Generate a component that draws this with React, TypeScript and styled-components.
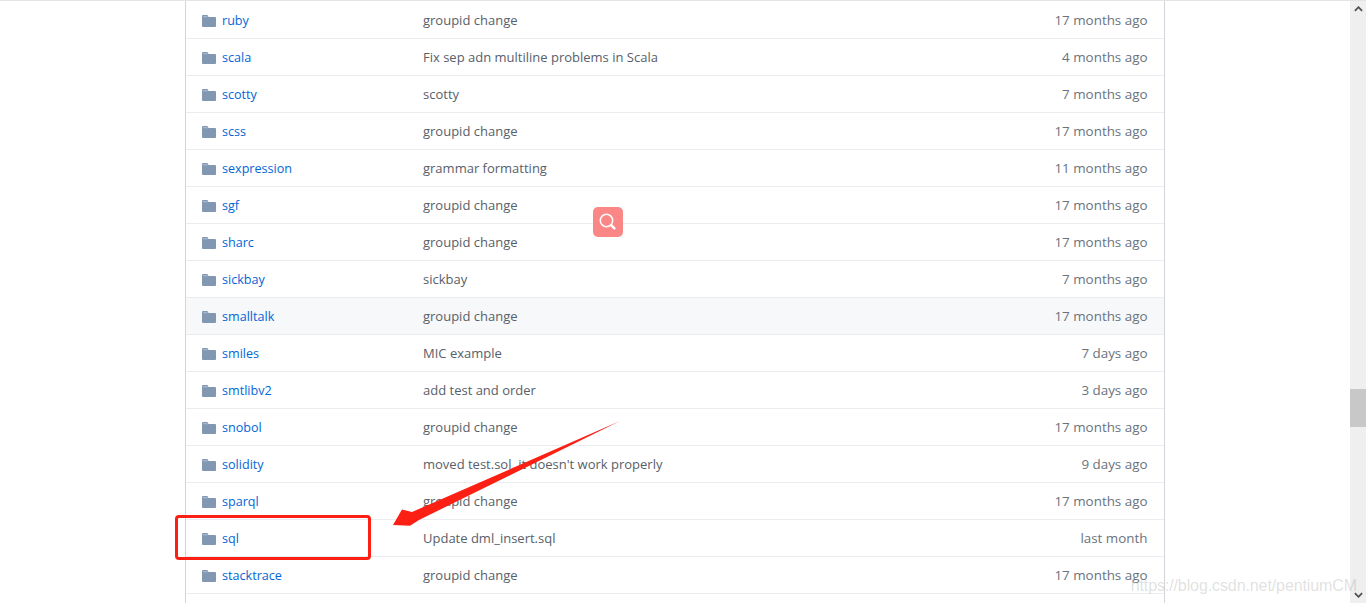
import React from 'react';
import styled, { createGlobalStyle } from 'styled-components';

interface FileRow {
  name: string;
  message: string;
  age: string;
  hovered?: boolean;
}

const rows: FileRow[] = [
  { name: 'ruby', message: 'groupid change', age: '17 months ago' },
  { name: 'scala', message: 'Fix sep adn multiline problems in Scala', age: '4 months ago' },
  { name: 'scotty', message: 'scotty', age: '7 months ago' },
  { name: 'scss', message: 'groupid change', age: '17 months ago' },
  { name: 'sexpression', message: 'grammar formatting', age: '11 months ago' },
  { name: 'sgf', message: 'groupid change', age: '17 months ago' },
  { name: 'sharc', message: 'groupid change', age: '17 months ago' },
  { name: 'sickbay', message: 'sickbay', age: '7 months ago' },
  { name: 'smalltalk', message: 'groupid change', age: '17 months ago', hovered: true },
  { name: 'smiles', message: 'MIC example', age: '7 days ago' },
  { name: 'smtlibv2', message: 'add test and order', age: '3 days ago' },
  { name: 'snobol', message: 'groupid change', age: '17 months ago' },
  { name: 'solidity', message: "moved test.sol, it doesn't work properly", age: '9 days ago' },
  { name: 'sparql', message: 'groupid change', age: '17 months ago' },
  { name: 'sql', message: 'Update dml_insert.sql', age: 'last month' },
  { name: 'stacktrace', message: 'groupid change', age: '17 months ago' },
];

const FolderIcon = () => (
  <FolderSvg viewBox="0 0 14 12" aria-hidden="true">
    <path d="M13 2H6.500L6 1C5.800.6 5.500 0 5 0H1C.5 0 0 .5 0 1v10c0 .5.5 1 1 1h12c.5 0 1-.5 1-1V3c0-.5-.5-1-1-1z" fill="#8197b2" />
    <path d="M1 1.200h4.400l.5 1H1z" fill="#b4c0cf" />
  </FolderSvg>
);

const App = () => {
  return (
    <>
      <GlobalStyle />
      <Page>
        <Main>
          <FileList>
            {rows.map((row) => (
              <Row key={row.name} $hovered={row.hovered}>
                <FolderIcon />
                <Name>{row.name}</Name>
                <Message>{row.message}</Message>
                <Age>{row.age}</Age>
              </Row>
            ))}
          </FileList>
        </Main>
        <Scrollbar>
          <ScrollArrow viewBox="0 0 10 6">
            <path d="M1 5l4-4 4 4" fill="none" stroke="#505050" strokeWidth="2" />
          </ScrollArrow>
          <Track>
            <Thumb />
          </Track>
          <ScrollArrow viewBox="0 0 10 6">
            <path d="M1 1l4 4 4-4" fill="none" stroke="#505050" strokeWidth="2" />
          </ScrollArrow>
        </Scrollbar>

        <SearchBadge>
          <svg width="20" height="20" viewBox="0 0 20 20" fill="none">
            <circle cx="8.500" cy="8.500" r="6.200" stroke="#fff" strokeWidth="1.500" />
            <path d="M13.200 13.200l3.200 3.200" stroke="#fff" strokeWidth="2.600" strokeLinecap="round" />
          </svg>
        </SearchBadge>

        <Highlight />
        <Arrow viewBox="0 0 240 120">
          <path d="M229 1L21 92L11 89.500L2 105L19 105.700L28 100Z" fill="#fb1f14" />
        </Arrow>
        <Watermark>https://blog.csdn.net/pentiumCM</Watermark>
      </Page>
    </>
  );
};

const GlobalStyle = createGlobalStyle`
  html, body {
    margin: 0;
    height: 100%;
    overflow: hidden;
    background: #fff;
  }
`;

const Page = styled.div`
  position: relative;
  display: flex;
  width: 1366px;
  height: 603px;
  overflow: hidden;
  font-family: "Open Sans", "Noto Sans", sans-serif;
  font-size: 13px;
  border-top: 1px solid #e4e4e4;
  box-sizing: border-box;
`;

const Main = styled.div`
  flex: 1;
  display: flex;
  justify-content: center;
  padding-right: 1px;
`;

const FileList = styled.div`
  width: 978px;
  height: 620px;
  padding-top: 1px;
  border-left: 1px solid #d1d5da;
  border-right: 1px solid #d1d5da;
`;

const Row = styled.div<{ $hovered?: boolean }>`
  display: flex;
  align-items: center;
  height: 36px;
  padding: 0 16px;
  border-bottom: 1px solid #eaecef;
  background: ${(p) => (p.$hovered ? '#f6f8fa' : 'transparent')};
`;

const FolderSvg = styled.svg`
  flex: none;
  width: 14px;
  height: 12px;
  margin: 2px 6.500px 0 0;
`;

const Name = styled.span`
  width: 201px;
  flex: none;
  font-size: 12.600px;
  color: #0366d6;
`;

const Message = styled.span`
  flex: 1;
  color: #586069;
`;

const Age = styled.span`
  font-size: 13.400px;
  color: #6a737d;
`;

const Scrollbar = styled.div`
  flex: none;
  width: 16px;
  display: flex;
  flex-direction: column;
  align-items: center;
  background: #efefef;
`;

const ScrollArrow = styled.svg`
  flex: none;
  width: 9px;
  height: 6px;
  margin: 5px 0;
`;

const Track = styled.div`
  flex: 1;
  width: 100%;
  padding-top: 372px;
  box-sizing: border-box;
`;

const Thumb = styled.div`
  width: 100%;
  height: 38px;
  background: #c8c8c8;
`;

const SearchBadge = styled.div`
  position: absolute;
  left: 593px;
  top: 206px;
  width: 30px;
  height: 30px;
  display: flex;
  align-items: center;
  justify-content: center;
  border-radius: 5px;
  background: #fb8686;
`;

const Highlight = styled.div`
  position: absolute;
  left: 175px;
  top: 514px;
  width: 196px;
  height: 45px;
  box-sizing: border-box;
  border: 3px solid #fb1f14;
  border-radius: 4px;
`;

const Arrow = styled.svg`
  position: absolute;
  left: 391px;
  top: 419px;
  width: 240px;
  height: 120px;
`;

const Watermark = styled.div`
  position: absolute;
  right: 9px;
  bottom: 8px;
  font-family: "Liberation Sans", sans-serif;
  font-size: 16px;
  letter-spacing: -0.100px;
  color: rgba(170, 170, 170, 0.36);
`;

export default App;
